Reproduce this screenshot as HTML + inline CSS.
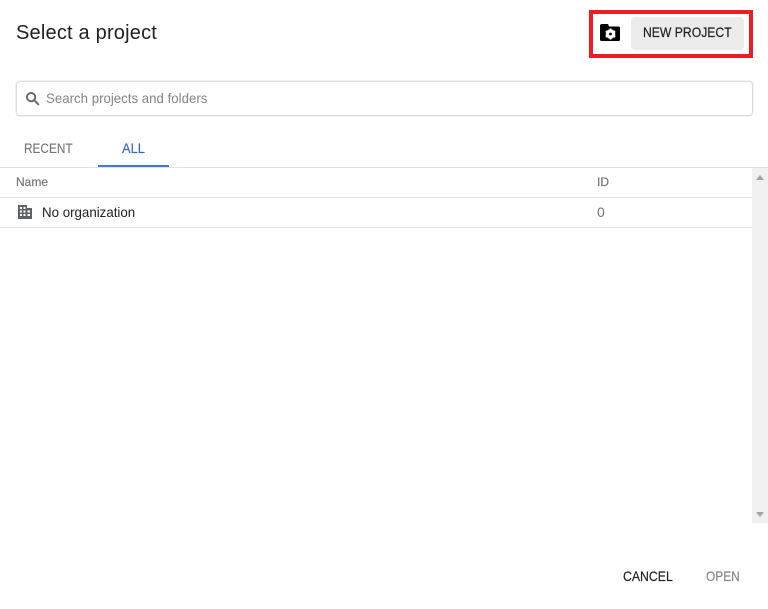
<!DOCTYPE html>
<html>
<head>
<meta charset="utf-8">
<style>
html,body{margin:0;padding:0;background:#fff;}
body{width:768px;height:609px;position:relative;overflow:hidden;font-family:"Liberation Sans",sans-serif;}
.a{position:absolute;white-space:nowrap;}
.t{transform-origin:0 50%;}
</style>
</head>
<body>
<div class="a" style="left:16px;top:20px;font-size:20px;line-height:26px;color:#202124;letter-spacing:.2px;">Select a project</div>

<div class="a" style="left:589px;top:10px;width:164px;height:48px;box-sizing:border-box;border:4px solid #ee1c25;"></div>
<svg class="a" style="left:598px;top:21px;" width="24" height="24" viewBox="0 0 24 24">
<path fill="#000" d="M4 3h6l1 2.500h9.500a1.500 1.500 0 0 1 1.500 1.500v11.500a1.500 1.500 0 0 1-1.500 1.500H3.500A1.500 1.500 0 0 1 2 18.500V5a2 2 0 0 1 2-2z"/>
<circle cx="12.500" cy="13" r="3.400" fill="none" stroke="#fff" stroke-width="2.800"/>
<path stroke="#fff" stroke-width="2" d="M12.500 7.500v11M7.800 10.250l9.400 5.500M7.800 15.750l9.400-5.500"/>
<circle cx="12.500" cy="13" r="1.400" fill="#000"/>
</svg>
<div class="a" style="left:631px;top:17px;width:113px;height:33px;background:#ebebeb;border-radius:4px;"></div>
<div class="a t" style="left:643px;top:23px;font-size:14px;line-height:18px;color:#202124;transform:scaleX(.87);-webkit-text-stroke:.2px #202124;">NEW PROJECT</div>

<div class="a" style="left:16px;top:81px;width:737px;height:35px;box-sizing:border-box;border:1px solid #dadce0;border-radius:4px;box-shadow:0 0 0 .5px #e4e4e4;"></div>
<svg class="a" style="left:24px;top:90px;" width="18" height="18" viewBox="0 0 24 24">
<path fill="#5f6368" stroke="#5f6368" stroke-width=".6" d="M15.500 14h-.79l-.28-.27A6.470 6.470 0 0 0 16 9.500 6.500 6.500 0 1 0 9.500 16c1.610 0 3.090-.59 4.230-1.570l.27.280v.790l5 4.990L20.490 19l-4.990-5zm-6 0C7.010 14 5 11.990 5 9.500S7.010 5 9.500 5 14 7.010 14 9.500 11.990 14 9.500 14z"/>
</svg>
<div class="a t" style="left:46px;top:89px;font-size:14px;line-height:18px;color:#80868b;transform:scaleX(.947);">Search projects and folders</div>

<div class="a t" style="left:24px;top:139px;font-size:14px;line-height:18px;color:#70757a;transform:scaleX(.845);-webkit-text-stroke:.1px #70757a;">RECENT</div>
<div class="a t" style="left:122px;top:139px;font-size:14px;line-height:18px;color:#3367d6;transform:scaleX(.92);-webkit-text-stroke:.2px #3367d6;">ALL</div>
<div class="a" style="left:98px;top:165px;width:71px;height:2px;background:#3b78e7;"></div>
<div class="a" style="left:0;top:167px;width:768px;height:1px;background:#e0e0e0;"></div>

<div class="a" style="left:16px;top:174px;font-size:12px;line-height:16px;color:#70757a;-webkit-text-stroke:.2px #70757a;">Name</div>
<div class="a" style="left:597px;top:174px;font-size:12px;line-height:16px;color:#70757a;-webkit-text-stroke:.2px #70757a;">ID</div>
<div class="a" style="left:0;top:197px;width:752px;height:1px;background:#e4e4e4;"></div>

<svg class="a" style="left:16px;top:203px;" width="18" height="18" viewBox="0 0 18 18">
<path fill="#5f6368" fill-rule="evenodd" d="M2 2h9v3h5v11H2V2zm2 2v2h2V4H4zm3.500 0v2h2V4h-2zM4 7.500v2h2v-2H4zm3.500 0v2h2v-2h-2zm4 0v2h2.500v-2h-2.500zM4 11v2h2v-2H4zm3.500 0v2h2v-2h-2zm4 0v2h2.500v-2h-2.500z"/>
</svg>
<div class="a t" style="left:42px;top:203px;font-size:14px;line-height:18px;color:#202124;transform:scaleX(.95);">No organization</div>
<div class="a" style="left:597px;top:203px;font-size:14px;line-height:18px;color:#70757a;">0</div>
<div class="a" style="left:0;top:227px;width:752px;height:1px;background:#e4e4e4;"></div>

<div class="a" style="left:752px;top:168px;width:16px;height:355px;background:#f0f0f0;"></div>
<div class="a" style="left:756px;top:175px;width:0;height:0;border-left:4px solid transparent;border-right:4px solid transparent;border-bottom:5px solid #a3a3a3;"></div>
<div class="a" style="left:756px;top:512px;width:0;height:0;border-left:4px solid transparent;border-right:4px solid transparent;border-top:5px solid #a3a3a3;"></div>

<div class="a t" style="left:623px;top:567px;font-size:14px;line-height:18px;color:#202124;transform:scaleX(.877);-webkit-text-stroke:.2px #202124;">CANCEL</div>
<div class="a t" style="left:706px;top:567px;font-size:14px;line-height:18px;color:#80868b;transform:scaleX(.85);-webkit-text-stroke:.2px #80868b;">OPEN</div>
</body>
</html>
